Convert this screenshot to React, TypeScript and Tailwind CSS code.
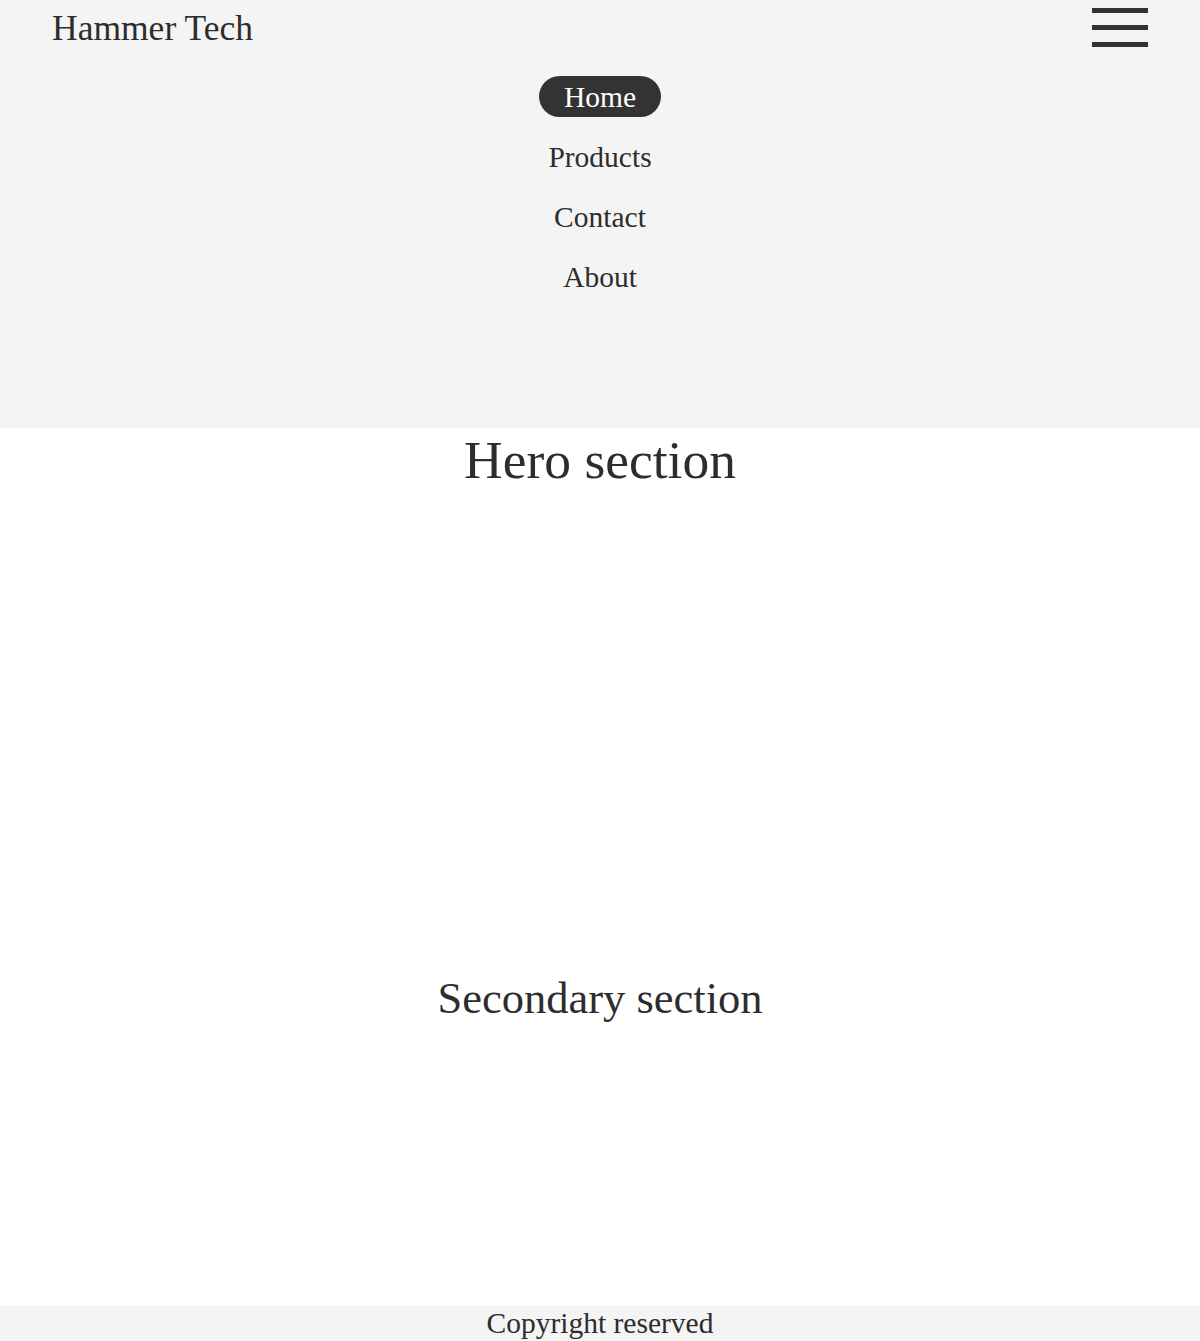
const serif = { fontFamily: '"Liberation Serif", "Times New Roman", serif' };

const links = ['Home', 'Products', 'Contact', 'About'];

function MenuIcon() {
  return (
    <button className="flex flex-col gap-[12px] pt-[8px]" aria-label="Menu">
      <span className="block h-[5px] w-[56px] bg-[#333]" />
      <span className="block h-[5px] w-[56px] bg-[#333]" />
      <span className="block h-[5px] w-[56px] bg-[#333]" />
    </button>
  );
}

function Header() {
  return (
    <header className="h-[428px] bg-[#f4f4f4]">
      <div className="flex h-[56px] items-start justify-between px-[52px]">
        <div className="mt-[11px] text-[35.5px] leading-none">Hammer Tech</div>
        <MenuIcon />
      </div>
      <nav className="mt-[20px] flex flex-col items-center gap-[19px]">
        {links.map((l, i) => (
          <a
            key={l}
            href="#"
            className={
              i === 0
                ? 'rounded-full bg-[#333] px-[25px] py-[3.5px] text-[29.5px] leading-[34px] text-white'
                : 'px-[25px] py-[3.5px] text-[29.5px] leading-[34px] text-[#2d2d2d]'
            }
          >
            {l}
          </a>
        ))}
      </nav>
    </header>
  );
}

export default function App() {
  return (
    <div className="w-full bg-white text-[#2d2d2d]" style={serif}>
      <Header />
      <section className="h-[548px] pt-[6px] text-center">
        <h1 className="text-[53.5px] leading-none">Hero section</h1>
      </section>
      <section className="h-[330px] text-center">
        <h2 className="text-[44.5px] leading-none">Secondary section</h2>
      </section>
      <footer className="h-[35px] bg-[#f4f4f4] text-center text-[29.5px] leading-[35px]">
        Copyright reserved
      </footer>
    </div>
  );
}
